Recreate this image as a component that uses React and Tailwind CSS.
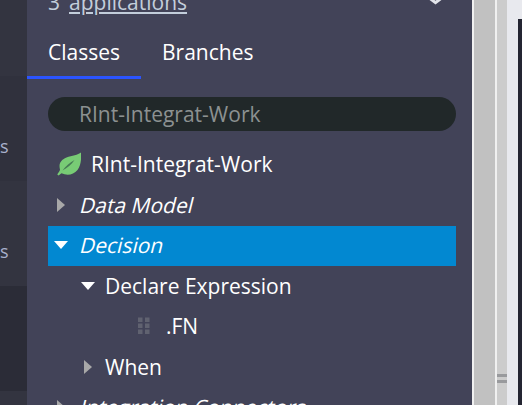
import { clsx } from 'clsx';

const rows = [
  { label: 'RInt-Integrat-Work', icon: 'leaf', pad: 'pl-[9px]', gap: 'ml-[10px]' },
  { label: 'Data Model', icon: 'closed', pad: 'pl-[9px]', gap: 'ml-[14px]', italic: true },
  { label: 'Decision', icon: 'open', pad: 'pl-[6px]', gap: 'ml-[11px]', italic: true, selected: true },
  { label: 'Declare Expression', icon: 'open', pad: 'pl-[33px]', gap: 'ml-[10px]' },
  { label: '.FN', icon: 'grip', pad: 'pl-[89px]', gap: 'ml-[15px]' },
  { label: 'When', icon: 'closed', pad: 'pl-[36px]', gap: 'ml-[13px]' },
  { label: 'Integration Connectors', icon: 'closed', pad: 'pl-[9px]', gap: 'ml-[14px]', italic: true },
];

const RowIcon = ({ type }) => {
  if (type === 'leaf') {
    return (
      <svg className="h-[24px] w-[24px]" viewBox="0 0 24 24">
        <path
          d="M24 .5C21 3 15 3.500 9.500 5.500C3.500 8 1.500 12 3 17.500C3 19 1 21 .3 22.500L1.500 23.500L4.500 21.300C10 24 16.500 23 20.500 18C24 13.500 24.500 6 24 .5Z"
          fill="#78cc75"
        />
        <path d="M5.500 18.500C8.500 14 12.500 11 17.500 8C15 12 10.500 16 5.500 18.500Z" fill="#467a55" />
      </svg>
    );
  }
  if (type === 'grip') {
    return (
      <svg className="h-[18px] w-[14px]" viewBox="0 0 14 18" fill="#606270">
        <path d="M1 .5h4.500v4.500H1zM8 .5h4.500v4.500H8zM1 6.500h4.500v4.500H1zM8 6.500h4.500v4.500H8zM1 12.500h4.500v4.500H1zM8 12.500h4.500v4.500H8z" />
      </svg>
    );
  }
  if (type === 'open') {
    return (
      <svg className="h-[8px] w-[14px]" viewBox="0 0 14 8">
        <path d="M0 0h14L7 8z" fill="#fff" />
      </svg>
    );
  }
  return (
    <svg className="h-[14px] w-[8px]" viewBox="0 0 8 14">
      <path d="M0 0v14l8-7z" fill="#a8a8a8" />
    </svg>
  );
};

// Italic labels are the regular face slanted from the baseline
const TreeRow = ({ row }) => (
  <div
    className={clsx(
      'flex items-center',
      row.pad,
      row.selected ? 'mt-[1px] h-[39.5px] bg-[#0288d1] pb-[1px]' : 'h-[40.5px]'
    )}
  >
    <RowIcon type={row.icon} />
    <span className={clsx(row.gap, row.italic && 'inline-block origin-[0_75%] -skew-x-[14deg]')}>
      {row.label}
    </span>
  </div>
);

// Strip of the page behind the explorer
const BackStrip = () => (
  <div className="flex w-[27px] shrink-0 flex-col text-[18px] leading-[24px] text-[#a9b1cc]">
    <div className="h-[76px] bg-[#333440]" />
    <div className="h-[105px] bg-[#30313d] pt-[58px]">s</div>
    <div className="h-[105px] bg-[#333440] pt-[58px]">s</div>
    <div className="h-[105px] bg-[#2b2c37]" />
    <div className="h-[14px] bg-[#333440]" />
  </div>
);

export default function App() {
  return (
    <div className="flex h-[405px] w-[522px] overflow-hidden bg-[#e8e9ee] font-['Open_Sans',sans-serif] text-[21px] leading-[28px] text-white">
      <BackStrip />

      <div className="flex w-[445px] shrink-0 flex-col bg-[#424358]">
        <div className="flex h-[27px] shrink-0 items-start justify-between pr-[28px] pl-[21px] text-[#c3cedb]">
          <div className="-mt-[12px]">
            3<span className="ml-[9px] underline decoration-[2px] underline-offset-[2px]">applications</span>
          </div>
          <svg className="mt-[-7px] h-[12px] w-[17px]" viewBox="0 0 17 12">
            <path d="M1 4l7.500 5.600L16 4" fill="none" stroke="#e2e4ea" strokeWidth="3" />
          </svg>
        </div>

        <div className="flex h-[52px] shrink-0">
          <div className="w-[114px] border-b-[3px] border-[#2b54ff] pt-[11px] pl-[21px]">Classes</div>
          <div className="pt-[11px] pl-[21px]">Branches</div>
        </div>

        <div className="mx-[21px] mt-[18px] flex h-[34px] w-[408px] shrink-0 items-center rounded-full bg-[#212829] pl-[31px] text-[#8c9191]">
          RInt-Integrat-Work
        </div>

        <div className="mx-[21px] mt-[13px] w-[408px]">
          {rows.map((row) => (
            <TreeRow key={row.label} row={row} />
          ))}
        </div>
      </div>

      <div className="w-[25px] shrink-0 border-x-2 border-[#f0f0f0] bg-[#c1c1c1]" />
      <div className="flex w-[10px] shrink-0 flex-col gap-[3px] bg-[#cccccc] pt-[374px]">
        <div className="h-[3px] bg-[#999a9d]" />
        <div className="h-[3px] bg-[#999a9d]" />
      </div>
      <div className="mt-[19px] ml-[11px] w-[4px] shrink-0 bg-[#242532]" />
    </div>
  );
}
